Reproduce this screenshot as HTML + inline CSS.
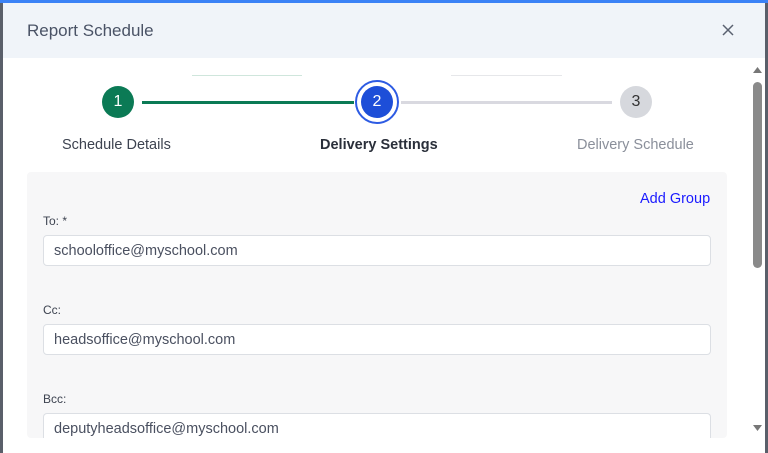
<!DOCTYPE html>
<html><head><style>
body{margin:0;width:768px;height:453px;overflow:hidden;background:#fff;font-family:"Liberation Sans",sans-serif;position:relative}
.a{position:absolute}
.inp{position:absolute;left:43px;width:668px;height:31px;border:1px solid #dcdfe4;border-radius:4px;background:#fff;box-sizing:border-box;font-size:14.5px;color:#4a5060;padding-left:10px;line-height:30px}
.lbl{position:absolute;left:43px;font-size:12px;color:#3d4350}
.c{position:absolute;border-radius:50%;text-align:center;font-size:16px}
</style></head><body>
<div class="a" style="left:0;top:0;width:768px;height:3px;background:#3b82f6"></div>
<div class="a" style="left:0;top:3px;width:3px;height:450px;background:#5a5f6a"></div>
<div class="a" style="left:765px;top:3px;width:3px;height:450px;background:#5a5f6a"></div>
<div class="a" style="left:3px;top:3px;width:762px;height:55px;background:#f0f4f9"></div>
<div class="a" style="left:27px;top:21px;font-size:17px;color:#4a5366">Report Schedule</div>
<svg class="a" style="left:722px;top:24px" width="12" height="12"><path d="M1 1L11 11M11 1L1 11" stroke="#5a6170" stroke-width="1.5"/></svg>
<div class="a" style="left:192px;top:75px;width:110px;height:1px;background:#cfe6dc"></div>
<div class="a" style="left:451px;top:75px;width:111px;height:1px;background:#e6e7ea"></div>
<div class="a" style="left:142px;top:101px;width:212px;height:3px;background:#0b7a55"></div>
<div class="a" style="left:401px;top:101px;width:211px;height:3px;background:#d9d9e0"></div>
<div class="c" style="left:102px;top:86px;width:32px;height:32px;line-height:32px;background:#0b7a55;color:#fff">1</div>
<div class="c" style="left:355px;top:80px;width:40px;height:40px;border:2px solid #2d5be3;background:#fff"></div>
<div class="c" style="left:361px;top:86px;width:32px;height:32px;line-height:32px;background:#1d4ed8;color:#fff">2</div>
<div class="c" style="left:620px;top:86px;width:32px;height:32px;line-height:32px;background:#d6d8dd;color:#333">3</div>
<div class="a" style="left:62px;top:137px;font-size:14.5px;color:#3d4350">Schedule Details</div>
<div class="a" style="left:320px;top:137px;font-size:14.5px;color:#2a2f3a;font-weight:bold">Delivery Settings</div>
<div class="a" style="left:577px;top:137px;font-size:14.5px;color:#8a8f9a">Delivery Schedule</div>
<div class="a" style="left:27px;top:172px;width:700px;height:266px;background:#f7f7f8;border-radius:4px"></div>
<div class="a" style="left:640px;top:191px;font-size:14.5px;color:#1a1aff">Add Group</div>
<div class="lbl" style="top:214px">To: *</div>
<div class="inp" style="top:235px">schooloffice@myschool.com</div>
<div class="lbl" style="top:303px">Cc:</div>
<div class="inp" style="top:324px">headsoffice@myschool.com</div>
<div class="lbl" style="top:392px">Bcc:</div>
<div class="inp" style="top:413px;height:25px;border-bottom:none;border-radius:4px 4px 0 0">deputyheadsoffice@myschool.com</div>
<div class="a" style="left:3px;top:438px;width:762px;height:15px;background:#fff"></div>
<div class="a" style="left:753px;top:82px;width:9px;height:186px;background:#8a8a8a;border-radius:5px"></div>
<svg class="a" style="left:753px;top:67px" width="9" height="7"><path d="M0 6L4.5 0L9 6Z" fill="#777"/></svg>
<svg class="a" style="left:753px;top:425px" width="9" height="7"><path d="M0 0L4.5 6L9 0Z" fill="#777"/></svg>
</body></html>
